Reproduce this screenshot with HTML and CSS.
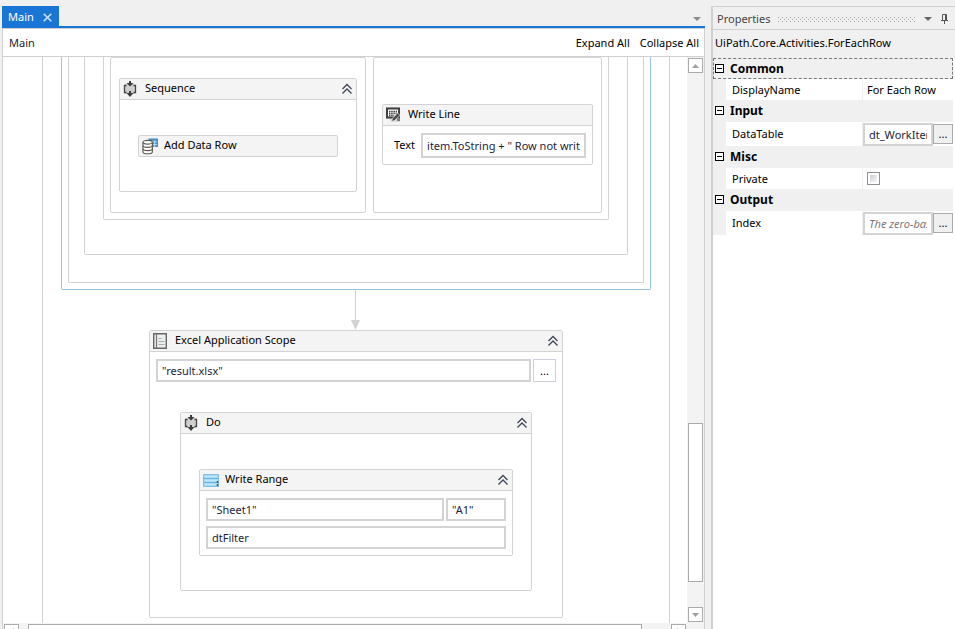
FILE: index.html
```
<!DOCTYPE html>
<html lang="en">
<head>
    <meta charset="UTF-8">
    <meta name="viewport" content="width=device-width, initial-scale=1.0">
    <title>Main - Workflow Designer</title>
    <link rel="stylesheet" href="styles.css">
</head>
<body>
    <!-- Shared icons -->
    <svg class="sprite" aria-hidden="true">
        <symbol id="icon-collapse" viewBox="0 0 12 12">
            <path d="M1.5 6 6 1.5 10.500 6M1.500 10.500 6 6l4.500 4.500" fill="none" stroke="#3f4658" stroke-width="1.300"/>
        </symbol>
        <symbol id="icon-sequence" viewBox="0 0 14 16">
            <path d="M2 3h10v10H2z" fill="#cfcfcf"/>
            <path d="M3.500 4.500h-2v7h2M10.500 4.500h2v7h-2" fill="none" stroke="#444" stroke-width="1.300"/>
            <path d="M6 0h2v2h2.500L7 5.500 3.500 2H6zM6 10h2v2h2.500L7 16l-3.500-4H6z" fill="#3c3c3c"/>
        </symbol>
    </svg>

    <main class="editor">
        <div class="tab-strip">
            <div class="tab">
                <span>Main</span>
                <button class="tab-close" aria-label="Close tab">
                    <svg width="9" height="9" viewBox="0 0 9 9"><path d="M.7.7l7.600 7.600M8.300.7.7 8.300" stroke="#cfe4f8" stroke-width="1.500"/></svg>
                </button>
            </div>
            <button class="tab-menu" aria-label="Open documents">
                <svg width="8" height="4" viewBox="0 0 8 4"><path d="M0 0h8L4 4z" fill="#8a8a8a"/></svg>
            </button>
        </div>

        <div class="designer">
            <div class="breadcrumb">
                <a href="#">Main</a>
                <div class="breadcrumb-actions">
                    <button>Expand All</button>
                    <button>Collapse All</button>
                </div>
            </div>

            <div class="workspace">
                <div class="canvas">
                    <div class="flow">
                        <div class="frame frame-selected">
                            <div class="frame frame-foreach">
                                <div class="frame frame-body">
                                    <div class="frame branches">
                                        <div class="branch branch-then">
                                            <section class="activity">
                                                <header class="activity-header">
                                                    <svg class="icon" width="14" height="16"><use href="#icon-sequence"/></svg>
                                                    <span>Sequence</span>
                                                    <button class="collapse" aria-label="Collapse"><svg width="12" height="12"><use href="#icon-collapse"/></svg></button>
                                                </header>
                                                <div class="activity-drop">
                                                    <div class="activity activity-closed">
                                                        <svg class="icon icon-wide" width="16" height="17" viewBox="0 0 17 17">
                                                            <path d="M7 0h10v9H7z" fill="#3f8fc8"/>
                                                            <path d="M8 3.500h8M8 6.500h8M10.500 2v7M13.500 2v7" stroke="#bfe0f5"/>
                                                            <path d="M1 4v10c0 3 10 3 10 0V4" fill="#fff" stroke="#5a594f" stroke-width="1.200"/>
                                                            <ellipse cx="6" cy="4" rx="5" ry="2" fill="#fff" stroke="#5a594f" stroke-width="1.200"/>
                                                            <path d="M1 7.500c0 2.500 10 2.500 10 0M1 11c0 2.500 10 2.500 10 0" fill="none" stroke="#5a594f" stroke-width="1.200"/>
                                                        </svg>
                                                        <span>Add Data Row</span>
                                                    </div>
                                                </div>
                                            </section>
                                        </div>
                                        <div class="branch branch-else">
                                            <section class="activity">
                                                <header class="activity-header">
                                                    <svg class="icon" width="14" height="15" viewBox="0 0 14 15">
                                                        <path d="M0 0h14v15H6l-3-3H0z" fill="#dedede"/>
                                                        <path d="M1 1.500h12v9H1z" fill="#fff" stroke="#3f3f3f" stroke-width="2"/>
                                                        <path d="M3 4.500h8M3 6.500h8M3 8.500h5" stroke="#3f3f3f" stroke-width="1.300" stroke-dasharray="1.500 .7"/>
                                                        <path d="M5.500 14.500l1-3.200L11.500 6 14 8.500l-5.500 5z" fill="#4a4a4a" stroke="#dedede" stroke-width=".8"/>
                                                        <path d="M11 11.500h3v2.500h-3z" fill="#777"/>
                                                    </svg>
                                                    <span>Write Line</span>
                                                </header>
                                                <div class="activity-fields field-row labelled">
                                                    <label for="line-text">Text</label>
                                                    <input id="line-text" class="field" value='item.ToString + " Row not written"'>
                                                </div>
                                            </section>
                                        </div>
                                    </div>
                                </div>
                            </div>
                        </div>

                        <svg class="connector" width="9" height="40" viewBox="0 0 9 40">
                            <path d="M4 0h1v30H4zM0 30h9L4.500 40z" fill="#d3d3d3"/>
                        </svg>

                        <section class="activity excel-scope">
                            <header class="activity-header">
                                <svg class="icon" width="14" height="16" viewBox="0 0 14 16">
                                    <path d="M.7.7h12.600v14.600H.7z" fill="#eee" stroke="#666" stroke-width="1.400"/>
                                    <path d="M3.500 1v14" stroke="#777" stroke-width="1.200"/>
                                    <path d="M5.500 5.500h3M5.500 8.500h6M5.500 11.500h6" stroke="#aaa"/>
                                </svg>
                                <span>Excel Application Scope</span>
                                <button class="collapse" aria-label="Collapse"><svg width="12" height="12"><use href="#icon-collapse"/></svg></button>
                            </header>
                            <div class="activity-fields field-row">
                                <input class="field" aria-label="Workbook path" value='"result.xlsx"'>
                                <button class="browse">...</button>
                            </div>
                            <div class="scope-body">
                                <section class="activity">
                                    <header class="activity-header">
                                        <svg class="icon" width="14" height="16"><use href="#icon-sequence"/></svg>
                                        <span>Do</span>
                                        <button class="collapse" aria-label="Collapse"><svg width="12" height="12"><use href="#icon-collapse"/></svg></button>
                                    </header>
                                    <div class="activity-drop">
                                        <section class="activity">
                                            <header class="activity-header">
                                                <svg class="icon icon-wide" width="16" height="13" viewBox="0 0 16 13">
                                                    <path d="M.5.5h15v12H.5z" fill="#a5dcf5" stroke="#7fbde2"/>
                                                    <path d="M1 4.500h14M1 8.500h14" stroke="#6fb1dc"/>
                                                    <path d="M2 2.500h12M2 6.500h12M2 10.500h10" stroke="#c0e8fa"/>
                                                    <path d="M14.500 7v6" stroke="#4b5a66" stroke-width="1.500" stroke-dasharray="2 1"/>
                                                </svg>
                                                <span>Write Range</span>
                                                <button class="collapse" aria-label="Collapse"><svg width="12" height="12"><use href="#icon-collapse"/></svg></button>
                                            </header>
                                            <div class="activity-fields">
                                                <div class="field-row">
                                                    <input class="field" aria-label="Sheet name" value='"Sheet1"'>
                                                    <input class="field field-cell" aria-label="Starting cell" value='"A1"'>
                                                </div>
                                                <div class="field-row">
                                                    <input class="field" aria-label="Data table" value="dtFilter">
                                                </div>
                                            </div>
                                        </section>
                                    </div>
                                </section>
                            </div>
                        </section>
                    </div>
                </div>

                <div class="scroll-v">
                    <button class="scroll-btn" aria-label="Scroll up"><svg width="7" height="4" viewBox="0 0 7 4"><path d="M0 4h7L3.500 0z" fill="#a0a0a0"/></svg></button>
                    <div class="track-before"></div>
                    <div class="thumb-v"></div>
                    <div class="track-after"></div>
                    <button class="scroll-btn" aria-label="Scroll down"><svg width="7" height="4" viewBox="0 0 7 4"><path d="M0 0h7L3.500 4z" fill="#a0a0a0"/></svg></button>
                </div>
            </div>

            <div class="scroll-h">
                <button class="scroll-btn" aria-label="Scroll left"><svg width="4" height="7" viewBox="0 0 4 7"><path d="M4 0v7L0 3.500z" fill="#a0a0a0"/></svg></button>
                <div class="thumb-h"></div>
                <button class="scroll-btn" aria-label="Scroll right"><svg width="4" height="7" viewBox="0 0 4 7"><path d="M0 0v7l4-3.500z" fill="#a0a0a0"/></svg></button>
            </div>
        </div>
    </main>

    <aside class="properties">
        <div class="panel-title">
            <span>Properties</span>
            <svg class="grip" height="5">
                <defs>
                    <pattern id="dots" width="4" height="4" patternUnits="userSpaceOnUse">
                        <path d="M0 0h1v1H0zM2 2h1v1H2z" fill="#a0a0a0"/>
                    </pattern>
                </defs>
                <rect width="100%" height="5" fill="url(#dots)"/>
            </svg>
            <button aria-label="Panel menu"><svg width="8" height="4" viewBox="0 0 8 4"><path d="M0 0h8L4 4z" fill="#666"/></svg></button>
            <button aria-label="Pin panel"><svg width="9" height="10" viewBox="0 0 9 10"><path d="M2.500 6V.5h4V6M5.500 1v5M1 6.500h7M4.500 7v3" fill="none" stroke="#555"/></svg></button>
        </div>
        <div class="panel-type">UiPath.Core.Activities.ForEachRow</div>

        <table class="grid">
            <colgroup>
                <col class="col-gutter">
                <col class="col-name">
                <col>
            </colgroup>
            <tbody>
                <tr class="category focused"><th colspan="3"><button class="toggle" aria-label="Collapse Common"></button>Common</th></tr>
                <tr class="row">
                    <td></td>
                    <td class="name">DisplayName</td>
                    <td class="value">For Each Row</td>
                </tr>
            </tbody>
            <tbody>
                <tr class="category"><th colspan="3"><button class="toggle" aria-label="Collapse Input"></button>Input</th></tr>
                <tr class="row row-edit">
                    <td></td>
                    <td class="name"><label for="data-table">DataTable</label></td>
                    <td class="value"><div class="value-edit"><input id="data-table" class="field" value="dt_WorkItems"><button class="browse">...</button></div></td>
                </tr>
            </tbody>
            <tbody>
                <tr class="category"><th colspan="3"><button class="toggle" aria-label="Collapse Misc"></button>Misc</th></tr>
                <tr class="row">
                    <td></td>
                    <td class="name"><label for="private">Private</label></td>
                    <td class="value"><input id="private" class="check" type="checkbox"></td>
                </tr>
            </tbody>
            <tbody>
                <tr class="category"><th colspan="3"><button class="toggle" aria-label="Collapse Output"></button>Output</th></tr>
                <tr class="row row-edit">
                    <td></td>
                    <td class="name"><label for="index">Index</label></td>
                    <td class="value"><div class="value-edit"><input id="index" class="field" placeholder="The zero-based index"><button class="browse">...</button></div></td>
                </tr>
            </tbody>
        </table>
    </aside>
</body>
</html>
```
FILE: styles.css
```
* {
    margin: 0;
    padding: 0;
    box-sizing: border-box;
}

body {
    display: flex;
    gap: 6px;
    height: 100vh;
    padding-left: 2px;
    overflow: hidden;
    background: #f0f0f0;
    color: #000;
    font-family: "Noto Sans", "Open Sans", sans-serif;
    font-size: 11px;
    line-height: 16px;
}

button,
input {
    font: inherit;
    color: inherit;
    border: none;
    border-radius: 0;
    background: none;
}

svg {
    display: block;
    flex: none;
}

.sprite {
    position: absolute;
    width: 0;
    height: 0;
}

/* Document tabs */
.editor {
    flex: 1;
    min-width: 0;
    display: flex;
    flex-direction: column;
}

.tab-strip {
    display: flex;
    justify-content: space-between;
    align-items: flex-end;
    height: 28px;
    border-bottom: 2px solid #1976d5;
}

.tab {
    display: flex;
    align-items: center;
    gap: 9px;
    height: 20px;
    padding: 2px 7px 0 6px;
    background: #1976d5;
    color: #fff;
}

.tab-menu {
    padding: 5px 4px;
}

.designer {
    flex: 1;
    min-height: 0;
    display: flex;
    flex-direction: column;
    border: 1px solid #d0d0d0;
    border-bottom: none;
    background: #fff;
}

.breadcrumb {
    display: flex;
    justify-content: space-between;
    align-items: center;
    height: 28px;
    padding: 0 5px 0 6px;
    border-bottom: 1px solid #d0d0d0;
}

.breadcrumb a {
    color: #1e1e2e;
    text-decoration: none;
}

.breadcrumb-actions {
    display: flex;
    gap: 10px;
}

/* Canvas */
.workspace {
    flex: 1;
    min-height: 0;
    display: flex;
}

.canvas {
    flex: 1;
    min-width: 0;
    display: flex;
    padding: 0 17px 0 39px;
    overflow: hidden;
}

.flow {
    flex: 1;
    min-width: 0;
    display: flex;
    flex-direction: column;
    align-items: center;
    padding: 0 18px;
    border: solid #d3d3d3;
    border-width: 0 1px;
}

.frame {
    border: 1px solid #d3d3d3;
    border-top: none;
    border-radius: 0 0 2px 2px;
}

.frame-selected {
    align-self: stretch;
    padding: 0 6px 6px;
    border-color: #99c5e2;
}

.frame-foreach {
    padding: 0 15px 27px;
}

.frame-body {
    padding: 0 18px 34px;
}

.branches {
    display: flex;
    gap: 7px;
    padding: 0 6px 6px;
}

.branch {
    min-width: 0;
    padding: 20px 8px;
    border: 1px solid #d3d3d3;
    border-radius: 2px;
}

.branch-then {
    flex: 257 1 0;
}

.branch-else {
    flex: 228 1 0;
    display: flex;
    flex-direction: column;
    justify-content: center;
    padding-bottom: 22px;
}

.connector {
    margin-right: 1px;
}

/* Activities */
.activity {
    border: 1px solid #d3d3d3;
    border-radius: 2px;
    background: #fff;
}

.activity-header,
.activity-closed {
    display: flex;
    align-items: center;
    height: 21px;
    padding: 0 3px;
    background: #f4f4f4;
}

.activity-header span,
.activity-closed span {
    padding-bottom: 2px;
}

.activity-header {
    border-bottom: 1px solid #d3d3d3;
}

.activity-closed {
    height: 22px;
}

.icon {
    margin-right: 8px;
}

.icon-wide {
    margin-right: 6px;
}

.collapse {
    margin-left: auto;
}

.activity-drop {
    padding: 35px 18px 34px;
}

.activity-fields {
    display: flex;
    flex-direction: column;
    gap: 5px;
    padding: 7px 6px 6px;
}

.field-row {
    display: flex;
    flex-direction: row;
    align-items: center;
    gap: 2px;
}

.labelled {
    gap: 6px;
    padding-left: 11px;
}

.field {
    flex: 1;
    min-width: 0;
    height: 23px;
    padding: 0 4px;
    border: 2px solid #d3d3d3;
    background: #fff;
    color: #1e1e3c;
}

.field::placeholder {
    color: #777;
    font-style: italic;
}

.labelled .field {
    height: 25px;
}

.field-cell {
    flex: 0 0 60px;
}

.browse {
    width: 23px;
    height: 23px;
    border: 1px solid #ccd0dc;
    background: #fff;
}

.excel-scope {
    align-self: stretch;
    margin: 0 88px;
}

.scope-body {
    padding: 24px 30px 26px;
}

/* Scroll bars */
.scroll-v {
    display: flex;
    flex-direction: column;
    width: 17px;
    padding: 1px;
    background: #f3f3f3;
}

.scroll-btn {
    flex: none;
    display: flex;
    justify-content: center;
    align-items: center;
    width: 15px;
    height: 15px;
    border: 1px solid #ababab;
    background: #fff;
}

.thumb-v {
    flex: 158;
    border: 1px solid #ababab;
    background: #fff;
}

.track-before {
    flex: 351;
}

.track-after {
    flex: 25;
}

.scroll-h {
    display: flex;
    justify-content: space-between;
    height: 6px;
    padding: 1px 18px 0 1px;
    overflow: hidden;
    background: #f3f3f3;
}

.thumb-h {
    flex: 1;
    height: 15px;
    margin: 0 29px 0 9px;
    border: 1px solid #ababab;
    background: #fff;
}

/* Properties panel */
.properties {
    width: 244px;
    margin-top: 6px;
    border: solid #d0d0d0;
    border-width: 1px 0 0 2px;
    background: #fff;
}

.panel-title {
    display: flex;
    align-items: center;
    gap: 8px;
    height: 23px;
    padding: 2px 6px 0 4px;
    border-bottom: 1px solid #d0d0d0;
    background: #f0f0f0;
    color: #444;
}

.grip {
    flex: 1;
    min-width: 0;
}

.panel-type {
    height: 28px;
    padding: 5px 2px;
    background: #f0f0f0;
}

.grid {
    width: 100%;
    padding-right: 2px;
    border-spacing: 0;
    table-layout: fixed;
}

.col-gutter {
    width: 13px;
}

.col-name {
    width: 137px;
}

.category th {
    height: 22px;
    padding-left: 2px;
    background: #f0f0f0;
    text-align: left;
    font-size: 12px;
}

.focused th {
    height: 21px;
    outline: 1px dashed #777;
    outline-offset: -1px;
}

/* Boxed minus sign */
.toggle {
    width: 9px;
    height: 9px;
    margin-right: 6px;
    border: 1px solid #000;
    background: linear-gradient(#000, #000) center / 5px 1px no-repeat #fff;
    vertical-align: 1px;
}

.row td {
    height: 21px;
    background: #fff;
}

.row td:first-child {
    background: #f0f0f0;
}

.row-edit td {
    height: 24px;
}

.row .name {
    padding-left: 6px;
    border-right: 1px solid #f0f0f0;
}

.row .value {
    padding-left: 4px;
}

.row-edit .value {
    padding-left: 0;
}

.value-edit {
    display: flex;
}

.value-edit .browse {
    width: 20px;
    height: 20px;
    align-self: center;
    border-color: #ababab;
    background: #f0f0f0;
}

.check {
    display: block;
    appearance: none;
    width: 13px;
    height: 13px;
    border: 1px solid #8e8f8f;
    background: linear-gradient(135deg, #cbcfd5, #f6f6f6) content-box #f4f4f4;
    padding: 2px;
}
```
